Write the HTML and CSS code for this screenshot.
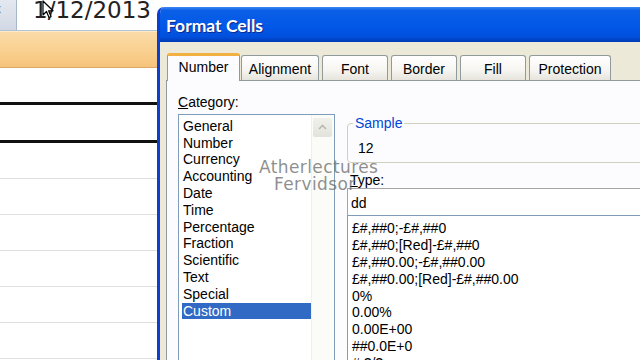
FILE: index.html
```html
<!DOCTYPE html>
<html>
<head>
    <title>Format Cells</title>
    <link rel="stylesheet" href="styles.css">
</head>
<body>
    <div class="sheet">
        <div class="formula-bar">
            <div class="name-edge"><span>x</span></div>
            <div class="formula">1/12/2013</div>
        </div>
        <div class="col-header"></div>
        <div class="row row-thick row-first"></div>
        <div class="row row-thick"></div>
        <div class="row"></div>
        <div class="row"></div>
        <div class="row"></div>
        <div class="row"></div>
        <div class="row"></div>
        <div class="row"></div>
    </div>

    <svg class="cursor" width="12" height="19" viewBox="0 0 12 19">
        <path d="M1 1 L1 15 L4.5 11.5 L7 17.5 L9 16.6 L6.6 10.8 L11 10.8 Z" fill="#fff" stroke="#000" stroke-width="1.2" stroke-linejoin="round"/>
    </svg>

    <div class="dialog">
        <div class="titlebar">Format Cells</div>
        <div class="dialog-body">
            <div class="tabs">
                <div class="tab active tab-number">Number</div>
                <div class="tab tab-align">Alignment</div>
                <div class="tab tab-small">Font</div>
                <div class="tab tab-small">Border</div>
                <div class="tab tab-small">Fill</div>
                <div class="tab tab-protect">Protection</div>
            </div>
            <div class="panel">
                <div class="category">
                    <div class="label"><u>C</u>ategory:</div>
                    <div class="listbox">
                        <ul class="items">
                            <li>General</li>
                            <li>Number</li>
                            <li>Currency</li>
                            <li>Accounting</li>
                            <li>Date</li>
                            <li>Time</li>
                            <li>Percentage</li>
                            <li>Fraction</li>
                            <li>Scientific</li>
                            <li>Text</li>
                            <li>Special</li>
                            <li class="selected">Custom</li>
                        </ul>
                        <div class="scrollbar">
                            <div class="scroll-up">
                                <svg width="9" height="6" viewBox="0 0 9 6">
                                    <path d="M1 5 L4.5 1.5 L8 5" fill="none" stroke="#b9b9b0" stroke-width="1.6"/>
                                </svg>
                            </div>
                        </div>
                    </div>
                </div>
                <div class="details">
                    <fieldset class="sample">
                        <legend>Sample</legend>
                        <div>12</div>
                    </fieldset>
                    <div class="label type-label"><u>T</u>ype:</div>
                    <div class="type-input">dd</div>
                    <ul class="formats">
                        <li>£#,##0;-£#,##0</li>
                        <li>£#,##0;[Red]-£#,##0</li>
                        <li>£#,##0.00;-£#,##0.00</li>
                        <li>£#,##0.00;[Red]-£#,##0.00</li>
                        <li>0%</li>
                        <li>0.00%</li>
                        <li>0.00E+00</li>
                        <li>##0.0E+0</li>
                        <li># ?/?</li>
                        <li># ??/??</li>
                    </ul>
                </div>
            </div>
        </div>
    </div>

    <div class="watermark">
        <div>Atherlectures</div>
        <div class="wm-second">Fervidsor</div>
    </div>
</body>
</html>
```

FILE: styles.css
```css
body {
    margin: 0;
    width: 640px;
    height: 360px;
    overflow: hidden;
    position: relative;
    background-color: #fff;
    font-family: "Liberation Sans", Arial, sans-serif;
    font-size: 14px;
    color: #000;
}
ul {
    list-style: none;
    margin: 0;
    padding: 0;
}

/* spreadsheet behind the dialog */
.formula-bar {
    display: flex;
    height: 30px;
    border-bottom: 1px solid #b4c2d6;
}
.name-edge {
    width: 16px;
    border-right: 1px solid #a9b7cb;
    background: linear-gradient(#e4e8ef, #d2d9e4);
    overflow: hidden;
    color: #6b7280;
    font-size: 12px;
    line-height: 18px;
}
.name-edge span {
    margin-left: -5px;
}
.formula {
    padding-left: 16px;
    font-family: "DejaVu Sans", sans-serif;
    font-size: 23px;
    line-height: 21px;
    color: #222;
}
.col-header {
    height: 35px;
    border-top: 1px solid #fdebc8;
    border-bottom: 1px solid #dca866;
    background: linear-gradient(#fadba8, #f9d08f 55%, #f6c47b);
}
.row {
    height: 35px;
    border-bottom: 1px solid #dddfe1;
}
.row-thick {
    border-bottom: 3px solid #111;
}
.row-first {
    height: 34px;
}

.cursor {
    position: absolute;
    left: 42px;
    top: 0;
}

/* dialog window */
.dialog {
    position: absolute;
    left: 157px;
    top: 7px;
    width: 520px;
    height: 400px;
    border-left: 3px solid #0a3fd0;
    border-radius: 7px 0 0 0;
    background-color: #ece9d8;
    overflow: hidden;
}
.titlebar {
    height: 33px;
    padding: 2px 0 0 6px;
    background: linear-gradient(#3c86f5 0, #0b5fe6 10%, #0258e8 55%, #0150de 85%, #0039b3 100%);
    color: #fff;
    font-family: Lato, "Liberation Sans", sans-serif;
    font-weight: bold;
    font-size: 17.5px;
    line-height: 33px;
    text-shadow: 1px 1px 0 #0a2a8c;
}
.dialog-body {
    padding: 0 0 0 6px;
}
.tabs {
    display: flex;
    align-items: flex-end;
    padding: 11px 0 0 1px;
}
.tab {
    box-sizing: border-box;
    height: 25px;
    margin-right: 3px;
    padding-top: 5px;
    border: 1px solid #919b9c;
    border-bottom: none;
    border-radius: 3px 3px 0 0;
    background: linear-gradient(#ffffff, #f6f5f1 60%, #e6e4dc);
    text-align: center;
    line-height: 17px;
}
.tab.active {
    position: relative;
    z-index: 1;
    height: 28px;
    margin-right: 1px;
    margin-bottom: -1px;
    padding-top: 3px;
    border-top: 3px solid #f2b042;
    background: #fcfcfe;
}
.tab-number {
    width: 73px;
}
.tab-align {
    width: 78px;
}
.tab-small {
    width: 66px;
}
.tab-protect {
    width: 82px;
}

.panel {
    display: flex;
    gap: 12px;
    height: 300px;
    padding: 13px 0 0 11px;
    border: 1px solid #919b9c;
    background-color: #fcfcfe;
}
.label {
    line-height: 16.8px;
}
.category {
    width: 157px;
    flex-shrink: 0;
}
.listbox {
    display: flex;
    box-sizing: border-box;
    width: 157px;
    height: 260px;
    margin-top: 3px;
    border: 1px solid #7f9db9;
    background-color: #fff;
}
.items {
    flex: 1;
    padding: 3px 0 0 3px;
}
.items li {
    padding-left: 1px;
    line-height: 16.8px;
}
.items li.selected {
    background-color: #316ac5;
    color: #fff;
}
.scrollbar {
    width: 22px;
    background-color: #fbfbf8;
    border-left: 1px solid #f0efe9;
}
.scroll-up {
    display: flex;
    align-items: center;
    justify-content: center;
    height: 19px;
    margin: 3px 2px 0 1px;
    border-radius: 2px;
    background: linear-gradient(#f1f1ec, #e3e3dc);
}

.details {
    flex: 1;
}
.sample {
    margin: 21px 0 0 0;
    padding: 8px 8px 5px 10px;
    border: 1px solid #d0d0bf;
    border-radius: 4px;
    line-height: 16.8px;
}
.sample legend {
    margin-left: -5px;
    padding: 0 2px;
    color: #0046d5;
}
.type-label {
    margin-top: 9px;
    padding-left: 3px;
}
.type-input {
    box-sizing: border-box;
    height: 27px;
    padding: 6px 0 0 3px;
    border-top: 1px solid #a5a5a8;
    border-left: 1px solid #a5a5a8;
    background-color: #fff;
    line-height: 16.8px;
}
.formats {
    height: 200px;
    padding: 4px 0 0 4px;
    border-top: 1px solid #7f9db9;
    border-left: 1px solid #7f9db9;
    background-color: #fff;
}
.formats li {
    line-height: 16.8px;
    white-space: nowrap;
}

.watermark {
    position: absolute;
    left: 259px;
    top: 159px;
    font-family: "DejaVu Sans", sans-serif;
    font-size: 17px;
    line-height: 17px;
    letter-spacing: 0.4px;
    color: rgba(105, 105, 105, 0.75);
}
.wm-second {
    margin-left: 15px;
}
```
